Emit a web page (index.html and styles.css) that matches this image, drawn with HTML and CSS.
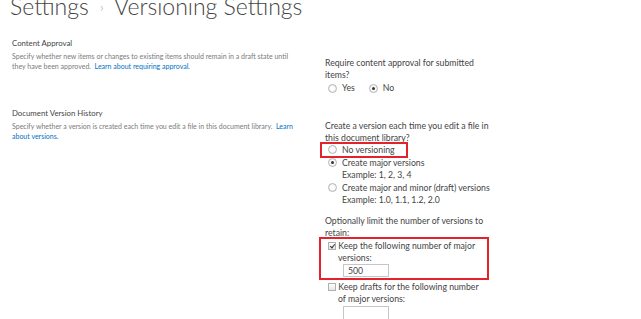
FILE: index.html
```html
<!DOCTYPE html>
<html lang="en">
<head>
    <meta charset="UTF-8">
    <title>Versioning Settings</title>
    <link rel="stylesheet" href="styles.css">
</head>
<body>
    <div class="pagina">
        <h1 class="titulo">Settings <span class="seta">&#8250;</span> Versioning Settings</h1>

        <div class="secao secao-aprovacao">
            <div class="info">
                <h2>Content Approval</h2>
                <p>Specify whether new items or changes to existing items should remain in a draft state until they have been approved. &nbsp;<a href="#">Learn about requiring approval.</a></p>
            </div>
            <div class="campos">
                <div class="pergunta">Require content approval for submitted items?</div>
                <div class="linha-radio">
                    <label class="opcao-inline"><span class="radio"></span>Yes</label>
                    <label class="opcao-inline"><span class="radio marcado"></span>No</label>
                </div>
            </div>
        </div>

        <div class="secao secao-versoes">
            <div class="info">
                <h2>Document Version History</h2>
                <p>Specify whether a version is created each time you edit a file in this document library. &nbsp;<a href="#">Learn about versions.</a></p>
            </div>
            <div class="campos">
                <div class="pergunta">Create a version each time you edit a file in this document library?</div>
                <div class="opcao destaque-curto"><span class="radio"></span>No versioning</div>
                <div class="opcao"><span class="radio marcado"></span>Create major versions
                    <div class="exemplo">Example: 1, 2, 3, 4</div>
                </div>
                <div class="opcao"><span class="radio"></span>Create major and minor (draft) versions
                    <div class="exemplo">Example: 1.0, 1.1, 1.2, 2.0</div>
                </div>

                <div class="pergunta limite">Optionally limit the number of versions to retain:</div>
                <div class="destaque-longo">
                    <div class="caixa-opcao"><span class="check marcado"></span> Keep the following number of major versions:</div>
                    <div class="entrada">500</div>
                </div>
                <div class="caixa-opcao rascunhos"><span class="check"></span> Keep drafts for the following number of major versions:</div>
                <div class="entrada vazia"></div>
            </div>
        </div>
    </div>
</body>
</html>
```

FILE: styles.css
```css
body {
    margin: 0;
    background-color: #ffffff;
    font-family: Lato, 'Open Sans', sans-serif;
    color: #444444;
    overflow: hidden;
}
.pagina {
    padding-left: 10px;
}
.titulo {
    margin: -8px 0 0 0;
    font-weight: 300;
    font-size: 23px;
    line-height: 28px;
    color: #444444;
}
.seta {
    font-size: 13px;
    color: #999999;
    position: relative;
    top: -3px;
    margin: 0 5px;
}
.secao {
    display: flex;
}
.info {
    width: 290px;
    padding-left: 2px;
}
.info h2 {
    font-size: 7.8px;
    font-weight: normal;
    margin: 0;
    line-height: 12px;
    color: #444444;
}
.info p {
    font-size: 7px;
    line-height: 9.5px;
    color: #7a7a7a;
    margin: 3px 0 0 0;
}
.info a {
    color: #0072c6;
    text-decoration: none;
}
.campos {
    margin-left: 23px;
    width: 170px;
    font-size: 8.7px;
    line-height: 12px;
}
.secao-aprovacao {
    margin-top: 13px;
}
.secao-aprovacao .campos {
    padding-top: 20px;
}
.secao-versoes {
    margin-top: 13px;
}
.secao-versoes .campos {
    padding-top: 13px;
}
.linha-radio {
    display: flex;
    gap: 14px;
    padding-left: 3px;
    margin-top: 1px;
}
.opcao-inline {
    display: flex;
    align-items: center;
}
.radio {
    display: inline-block;
    box-sizing: border-box;
    width: 9px;
    height: 9px;
    border-radius: 50%;
    border: 1px solid #b5b5b5;
    background: radial-gradient(circle, #ffffff 30%, #e4e4e4 100%);
    margin-right: 5px;
    vertical-align: -1px;
    position: relative;
    text-indent: 0;
}
.radio.marcado::after {
    content: "";
    position: absolute;
    left: 2px;
    top: 2px;
    width: 3px;
    height: 3px;
    border-radius: 50%;
    background: #333333;
}
.opcao {
    padding-left: 17px;
    text-indent: -14px;
    margin-top: 1px;
}
.exemplo {
    text-indent: 0;
}
.destaque-curto {
    outline: 2px solid #e3232c;
    width: 64px;
    margin-left: -3px;
    padding-left: 20px;
    margin-top: 0;
}
.pergunta.limite {
    margin-top: 9px;
}
.destaque-longo {
    outline: 2px solid #e3232c;
    margin-left: -4px;
    padding-left: 4px;
    width: 162px;
    padding-bottom: 1px;
}
.caixa-opcao {
    width: 145px;
    padding-left: 13px;
    text-indent: -10px;
    padding-top: 1px;
}
.caixa-opcao.rascunhos {
    padding-top: 0;
    margin-top: 3px;
}
.check {
    display: inline-block;
    box-sizing: border-box;
    width: 8px;
    height: 8px;
    border: 1px solid #b0b0b0;
    background: linear-gradient(#ffffff, #e6e6e6);
    vertical-align: -1px;
    position: relative;
}
.check.marcado::after {
    content: "";
    position: absolute;
    left: 2px;
    top: 0px;
    width: 2px;
    height: 4px;
    border: solid #333333;
    border-width: 0 1.5px 1.5px 0;
    transform: rotate(40deg);
}
.entrada {
    box-sizing: border-box;
    margin-left: 18px;
    margin-top: 0;
    width: 46px;
    height: 13px;
    border: 1px solid #c6c6c6;
    font-size: 8.7px;
    line-height: 11px;
    padding-left: 4px;
}
.entrada.vazia {
    margin-top: 1px;
    height: 18px;
}
```
